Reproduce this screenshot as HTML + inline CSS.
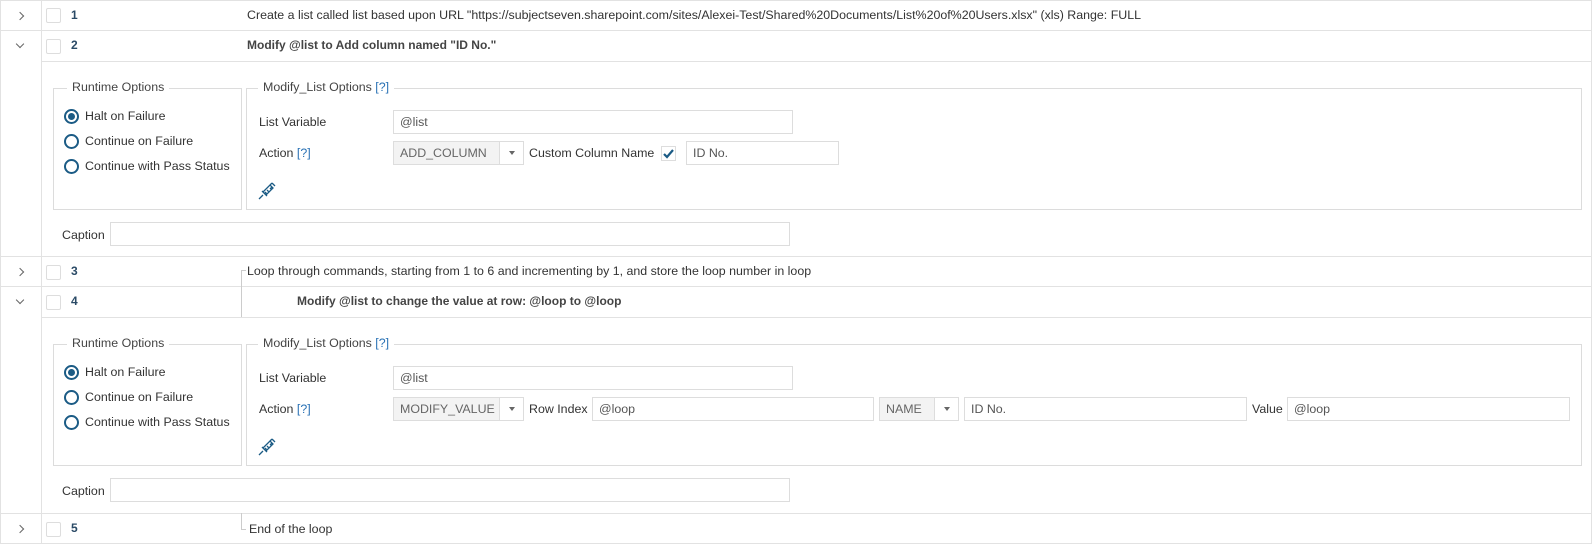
<!DOCTYPE html>
<html><head><meta charset="utf-8"><style>
*{box-sizing:border-box;margin:0;padding:0}
body{width:1592px;height:544px;background:#fff;font-family:"Liberation Sans","DejaVu Sans",sans-serif;font-size:12.4px;color:#333;position:relative;overflow:hidden}
.a{position:absolute}
.hl{position:absolute;left:0;width:1592px;height:1px;background:#e2e2e2}
.hl2{position:absolute;left:41px;width:1551px;height:1px;background:#e2e2e2}
.cb{position:absolute;left:46px;width:15px;height:15px;border:1px solid #ddd;border-radius:2px;background:#fff}
.num{position:absolute;left:71px;font-weight:bold;color:#2a4a66;font-size:12px}
.chev{position:absolute;left:14px;width:12px;height:12px}
.chev:after{content:"";position:absolute;left:3px;top:3px;width:5px;height:5px;border-right:1.3px solid #666;border-bottom:1.3px solid #666;transform:rotate(-45deg)}
.chev.d:after{transform:rotate(45deg);top:1px}
.fs{position:absolute;border:1px solid #dcdcdc}
.lg{position:absolute;background:#fff;padding:0 5px;font-size:12.4px;color:#444}
.inp{position:absolute;border:1px solid #ddd;height:24px;background:#fff;padding:4px 6px;font-size:12.4px;color:#555}
.sel{position:absolute;border:1px solid #ddd;height:24px;background:#f3f3f3;padding:4px 6px;font-size:12.4px;color:#666}
.sel i{position:absolute;right:0;top:0;width:24px;height:22px;border-left:1px solid #ddd;background:#fff}
.sel i:after{content:"";position:absolute;left:9px;top:9px;border:3px solid transparent;border-top:4px solid #666}
.rad{position:absolute;width:15px;height:15px;border:2px solid #1b5b85;border-radius:50%}
.rad.on:after{content:"";position:absolute;left:2px;top:2px;width:7px;height:7px;border-radius:50%;background:#1b5b85}
.q{color:#2a72b5}
.lbl{position:absolute;font-size:12.4px;color:#333}
.b{font-weight:bold;color:#444;font-size:12px}
</style></head><body>
<div class="a" style="left:0;top:0;width:1px;height:544px;background:#e2e2e2"></div>
<div class="a" style="left:1591px;top:0;width:1px;height:544px;background:#e2e2e2"></div>
<div class="a" style="left:41px;top:0;width:1px;height:544px;background:#e2e2e2"></div>
<div class="hl" style="top:0"></div>
<div class="hl" style="top:30px"></div>
<div class="hl2" style="top:61px"></div>
<div class="hl" style="top:256px"></div>
<div class="hl" style="top:286px"></div>
<div class="hl2" style="top:317px"></div>
<div class="hl" style="top:513px"></div>
<div class="hl" style="top:543px"></div>

<div class="chev" style="top:10px"></div>
<div class="cb" style="top:8px"></div>
<div class="num" style="top:8px">1</div>
<div class="a" style="left:247px;top:8px">Create a list called list based upon URL "https://subjectseven.sharepoint.com/sites/Alexei-Test/Shared%20Documents/List%20of%20Users.xlsx" (xls) Range: FULL</div>
<div class="chev d" style="top:40px"></div>
<div class="cb" style="top:39px"></div>
<div class="num" style="top:38px">2</div>
<div class="a b" style="left:247px;top:38px">Modify @list to Add column named "ID No."</div>

<div class="fs" style="left:53px;top:88px;width:189px;height:122px"></div>
<div class="lg" style="left:67px;top:80px">Runtime Options</div>
<div class="rad on" style="left:64px;top:109px"></div><div class="lbl" style="left:85px;top:109px">Halt on Failure</div>
<div class="rad" style="left:64px;top:134px"></div><div class="lbl" style="left:85px;top:134px">Continue on Failure</div>
<div class="rad" style="left:64px;top:159px"></div><div class="lbl" style="left:85px;top:159px">Continue with Pass Status</div>
<div class="fs" style="left:246px;top:88px;width:1336px;height:122px"></div>
<div class="lg" style="left:258px;top:80px">Modify_List Options <span class="q">[?]</span></div>
<div class="lbl" style="left:259px;top:115px">List Variable</div>
<div class="inp" style="left:393px;top:110px;width:400px">@list</div>
<div class="lbl" style="left:259px;top:146px">Action <span class="q">[?]</span></div>
<div class="sel" style="left:393px;top:141px;width:131px">ADD_COLUMN<i></i></div>
<div class="lbl" style="left:529px;top:146px">Custom Column Name</div>
<div class="a" style="left:661px;top:146px;width:15px;height:15px;border:1px solid #ddd"></div>
<svg class="a" style="left:662px;top:147px" width="13" height="13" viewBox="0 0 13 13"><path d="M2 7l3 3 6-7" fill="none" stroke="#1b5b85" stroke-width="2.2"/></svg>
<div class="inp" style="left:686px;top:141px;width:153px">ID No.</div>
<svg class="a" style="left:257px;top:182px" width="20" height="18" viewBox="0 0 20 18" fill="none" stroke="#1b5b85" stroke-width="1.3"><path d="M2 17l4-4M5 9l5 5M6 10l7-7 3 3-7 7zM13 3l2-2M15 1l3 3M15 5l-2 2M8 10l1.5 1.5M10 8l1.5 1.5"/></svg>
<div class="lbl" style="left:62px;top:228px">Caption</div>
<div class="inp" style="left:110px;top:222px;width:680px"></div>

<div class="chev" style="top:266px"></div>
<div class="cb" style="top:265px"></div>
<div class="num" style="top:264px">3</div>
<div class="a" style="left:241px;top:270px;width:1px;height:47px;background:#ccc"></div>
<div class="a" style="left:241px;top:270px;width:5px;height:1px;background:#ccc"></div>
<div class="a" style="left:247px;top:264px">Loop through commands, starting from 1 to 6 and incrementing by 1, and store the loop number in loop</div>
<div class="chev d" style="top:296px"></div>
<div class="cb" style="top:295px"></div>
<div class="num" style="top:294px">4</div>
<div class="a b" style="left:297px;top:294px">Modify @list to change the value at row: @loop to @loop</div>

<div class="fs" style="left:53px;top:344px;width:189px;height:122px"></div>
<div class="lg" style="left:67px;top:336px">Runtime Options</div>
<div class="rad on" style="left:64px;top:365px"></div><div class="lbl" style="left:85px;top:365px">Halt on Failure</div>
<div class="rad" style="left:64px;top:390px"></div><div class="lbl" style="left:85px;top:390px">Continue on Failure</div>
<div class="rad" style="left:64px;top:415px"></div><div class="lbl" style="left:85px;top:415px">Continue with Pass Status</div>
<div class="fs" style="left:246px;top:344px;width:1336px;height:122px"></div>
<div class="lg" style="left:258px;top:336px">Modify_List Options <span class="q">[?]</span></div>
<div class="lbl" style="left:259px;top:371px">List Variable</div>
<div class="inp" style="left:393px;top:366px;width:400px">@list</div>
<div class="lbl" style="left:259px;top:402px">Action <span class="q">[?]</span></div>
<div class="sel" style="left:393px;top:397px;width:131px">MODIFY_VALUE<i></i></div>
<div class="lbl" style="left:529px;top:402px">Row Index</div>
<div class="inp" style="left:592px;top:397px;width:282px">@loop</div>
<div class="sel" style="left:879px;top:397px;width:80px">NAME<i></i></div>
<div class="inp" style="left:964px;top:397px;width:283px">ID No.</div>
<div class="lbl" style="left:1252px;top:402px">Value</div>
<div class="inp" style="left:1287px;top:397px;width:283px">@loop</div>
<svg class="a" style="left:257px;top:438px" width="20" height="18" viewBox="0 0 20 18" fill="none" stroke="#1b5b85" stroke-width="1.3"><path d="M2 17l4-4M5 9l5 5M6 10l7-7 3 3-7 7zM13 3l2-2M15 1l3 3M15 5l-2 2M8 10l1.5 1.5M10 8l1.5 1.5"/></svg>
<div class="lbl" style="left:62px;top:484px">Caption</div>
<div class="inp" style="left:110px;top:478px;width:680px"></div>

<div class="chev" style="top:523px"></div>
<div class="cb" style="top:522px"></div>
<div class="num" style="top:521px">5</div>
<div class="a" style="left:241px;top:513px;width:1px;height:17px;background:#ccc"></div>
<div class="a" style="left:241px;top:529px;width:5px;height:1px;background:#ccc"></div>
<div class="a" style="left:249px;top:522px">End of the loop</div>
</body></html>
